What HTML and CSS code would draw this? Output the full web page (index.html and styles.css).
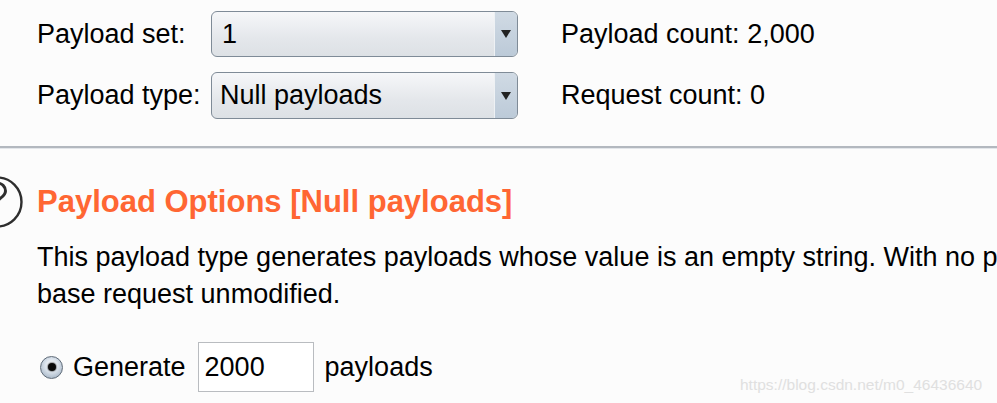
FILE: index.html
```html
<!DOCTYPE html>
<html>
<head>
<meta charset="utf-8">
<link rel="stylesheet" href="styles.css">
</head>
<body>
<div class="page">
  <div class="top">
    <div class="label">Payload set:</div>
    <div class="combo"><span class="combo-text">1</span><span class="combo-btn"><span class="tri"></span></span></div>
    <div class="info">Payload count: 2,000</div>
    <div class="label">Payload type:</div>
    <div class="combo"><span class="combo-text combo-text2">Null payloads</span><span class="combo-btn"><span class="tri"></span></span></div>
    <div class="info">Request count: 0</div>
  </div>
  <div class="divider"></div>
  <div class="section">
    <div class="heading-row">
      <svg class="help" width="56" height="56" viewBox="0 0 56 56">
        <circle cx="28" cy="28" r="24.5" fill="none" stroke="#2e2e2e" stroke-width="2.4"/>
        <path d="M20 17 C20 12 24 9 28 9 C33 9 36.5 12.5 36.5 17 C36.5 21 33 23 30.5 25 C28.5 26.5 28 28 28 31" fill="none" stroke="#2e2e2e" stroke-width="3"/>
        <rect x="26.5" y="35" width="3" height="3.5" fill="#2e2e2e"/>
      </svg>
      <h2 class="heading">Payload Options [Null payloads]</h2>
    </div>
    <p class="desc">This payload type generates payloads whose value is an empty string. With no payload markers configured, this can be used to repeatedly issue the<br>base request unmodified.</p>
    <div class="gen-row">
      <span class="radio"><span class="dot"></span></span>
      <span class="gen-label">Generate</span>
      <span class="field">2000</span>
      <span class="gen-label gen-after">payloads</span>
    </div>
  </div>
  <div class="watermark">https://blog.csdn.net/m0_46436640</div>
</div>
</body>
</html>
```
FILE: styles.css
```css
html, body {
  margin: 0;
  padding: 0;
  background: #fcfcfc;
  overflow: hidden;
}
body {
  width: 997px;
  height: 403px;
  font-family: "Liberation Sans", Arial, sans-serif;
  font-size: 27px;
  color: #000;
}
.page {
  position: relative;
  width: 997px;
  height: 403px;
  overflow: hidden;
}
.top {
  display: grid;
  grid-template-columns: 174px 307px auto;
  grid-template-rows: 46px 47px;
  row-gap: 15px;
  padding: 11px 0 0 37px;
  height: 136px;
  box-sizing: border-box;
  align-items: center;
}
.label {
  white-space: nowrap;
}
.combo {
  height: 100%;
  box-sizing: border-box;
  border: 1.5px solid #7f8b97;
  border-radius: 6px;
  background: linear-gradient(#f6f7f9, #e4e7eb 60%, #dde1e5);
  display: flex;
  align-items: center;
  overflow: hidden;
}
.combo-text {
  flex: 1;
  padding-left: 10px;
}
.combo-text2 {
  padding-left: 8px;
}
.combo-btn {
  width: 22px;
  height: 100%;
  border-left: 1px solid #eef1f4;
  background: linear-gradient(#d0dae4, #bccad8);
  display: flex;
  align-items: center;
  justify-content: center;
}
.tri {
  width: 0;
  height: 0;
  border-left: 5px solid transparent;
  border-right: 5px solid transparent;
  border-top: 8px solid #222;
}
.info {
  margin-left: 43px;
  white-space: nowrap;
}
.divider {
  height: 2px;
  background: #b3b8bf;
  border-bottom: 1px solid #e3e6ea;
  margin-top: 10px;
}
.section {
  padding-left: 37px;
}
.heading-row {
  display: flex;
  align-items: center;
  margin-top: 25px;
  height: 56px;
}
.help {
  margin-left: -68px;
  margin-right: 12px;
  flex: none;
}
.heading {
  margin: 0;
  font-size: 31px;
  font-weight: bold;
  color: #ff6633;
  line-height: 40px;
  white-space: nowrap;
}
.desc {
  margin: 9px 0 0 0;
  line-height: 37px;
  white-space: nowrap;
}
.gen-row {
  display: flex;
  align-items: center;
  margin-top: 29px;
  height: 50px;
}
.radio {
  width: 23px;
  height: 23px;
  box-sizing: border-box;
  border-radius: 50%;
  border: 1.5px solid #5f6b78;
  background: radial-gradient(circle at 50% 40%, #ffffff 0, #dbe3ec 40%, #a9b8c8 80%, #8e9eb0 100%);
  display: flex;
  align-items: center;
  justify-content: center;
  margin-left: 3px;
}
.dot {
  width: 8px;
  height: 8px;
  border-radius: 50%;
  background: #0a0a0a;
  box-shadow: 0 0 1px 1px rgba(0,0,0,0.35);
}
.gen-label {
  margin-left: 10px;
}
.field {
  margin-left: 12px;
  width: 116px;
  height: 50px;
  box-sizing: border-box;
  border: 1.5px solid #b9bcc0;
  background: #fff;
  padding-left: 6px;
  display: flex;
  align-items: center;
}
.gen-after {
  margin-left: 11px;
}
.watermark {
  position: absolute;
  left: 740px;
  top: 376px;
  font-size: 15.5px;
  color: #e0e0e0;
  white-space: nowrap;
}
```
